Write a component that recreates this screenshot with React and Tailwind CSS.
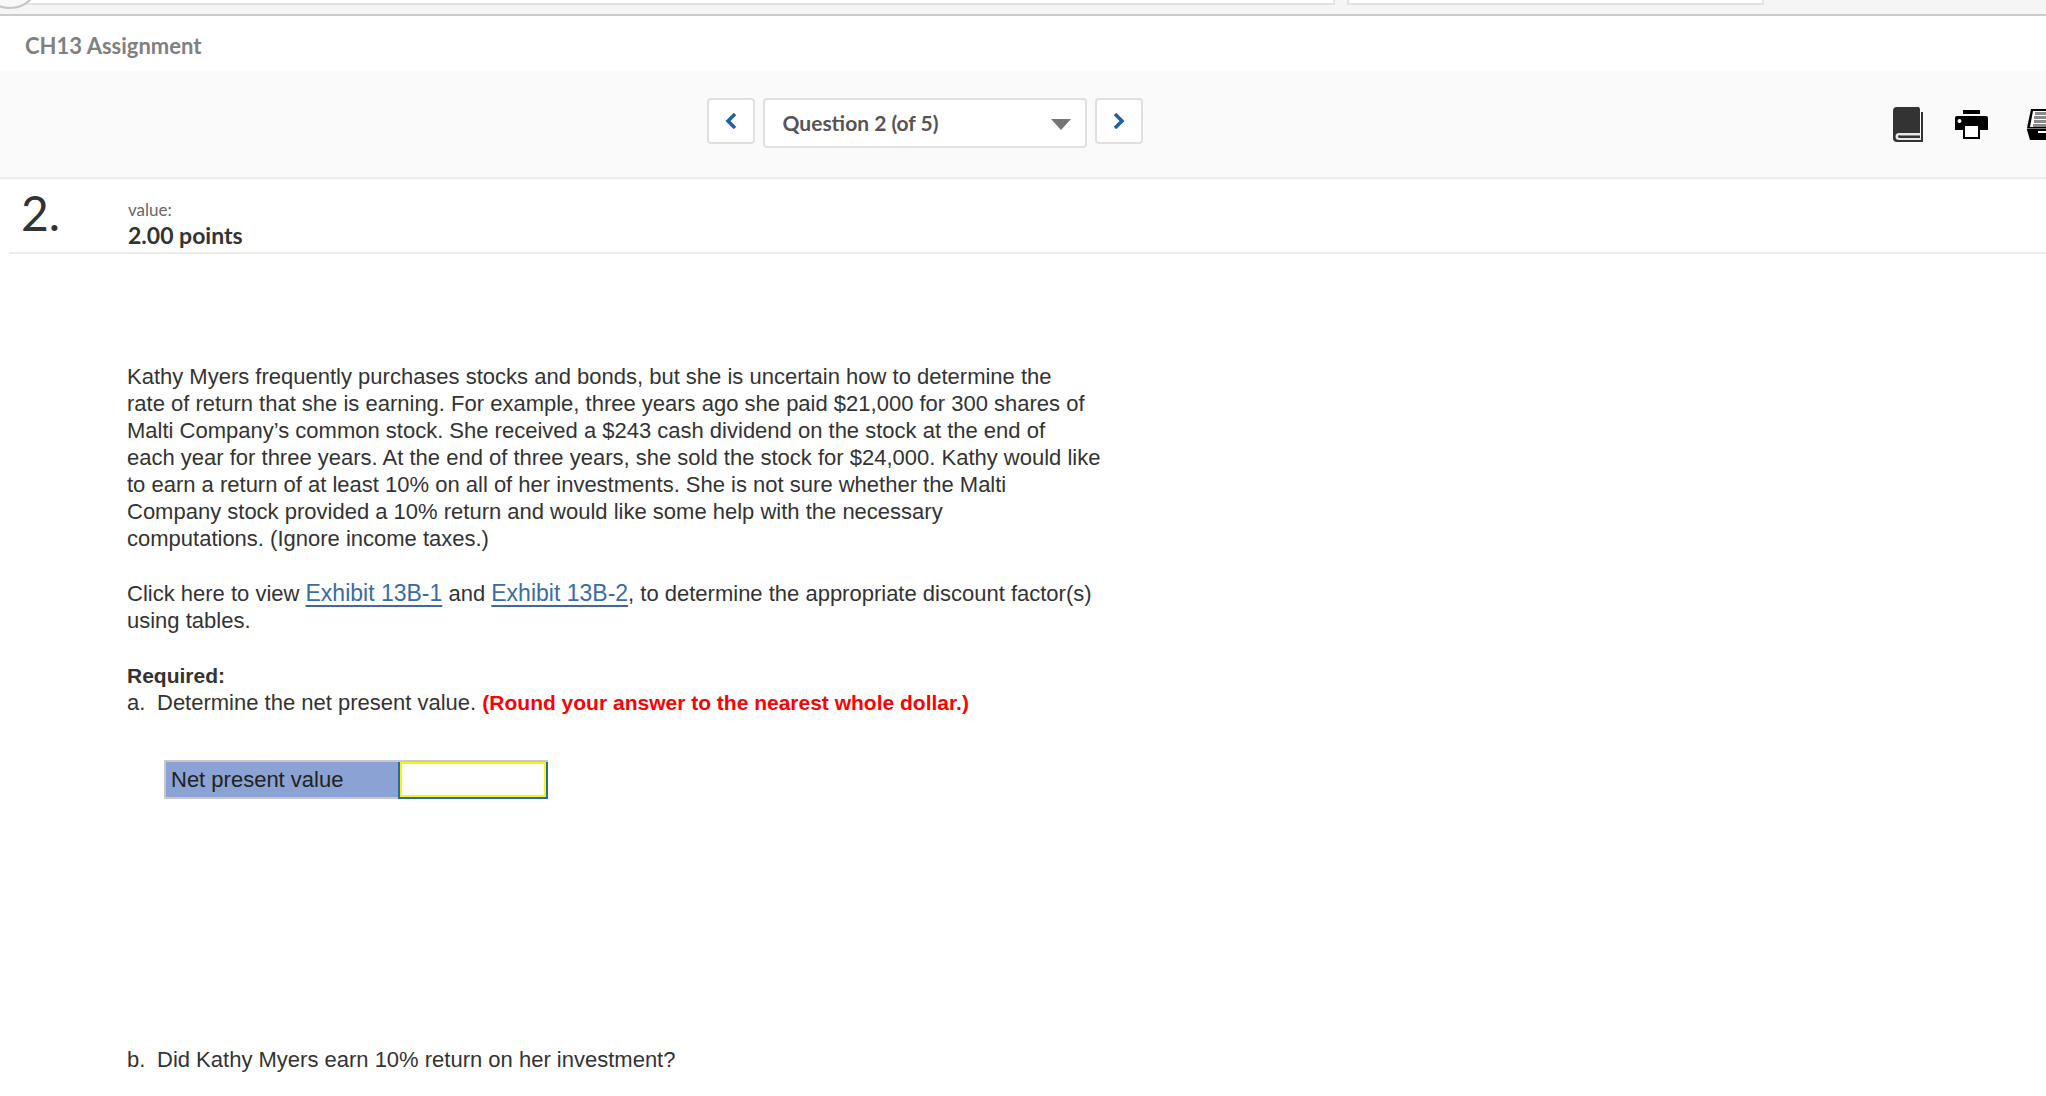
import React from 'react';

const BookIcon = () => (
  <svg width="31" height="35" viewBox="0 0 31 35" aria-hidden="true">
    <path d="M4 0H26L27 2V5H30V35H4Q0 35 0 31V4Q0 0 4 0Z" fill="#333333" />
    <path d="M27 5H28V31H27Z" fill="#ffffff" />
    <path d="M27 26H6Q2.500 26 2.500 29.500T6 33H28V31H7Q5 31 5 29.500T7 28H27Z" fill="#e8e8e8" />
    <path d="M7 28H27V29H7Z" fill="#8a8a8a" />
  </svg>
);

const PrinterIcon = () => (
  <svg width="33" height="29" viewBox="0 0 33 29" aria-hidden="true">
    <path
      d="M8 0H25V4H8ZM2 6H31Q33 6 33 8V20H25V29H8V20H0V8Q0 6 2 6Z"
      fill="#000000"
    />
    <path d="M10 16H23V27H10Z" fill="#ffffff" />
    <circle cx="4.500" cy="11" r="2" fill="#ffffff" />
  </svg>
);

const TrayIcon = () => (
  <svg width="40" height="31" viewBox="0 0 40 31" aria-hidden="true">
    <path d="M4 0H36L40 19V21L37 31H3L0 21V19Z" fill="#000000" />
    <path d="M6 2H34L37 18H3Z" fill="#ffffff" />
    <path d="M8 3H32V6H8ZM7 7H33V10H7ZM7 11H33V14H7ZM6 15H34V18H6Z" fill="#8a8a8a" />
    <path d="M0 19H40V20H0Z" fill="#777777" />
    <path d="M11 22H29V24H11Z" fill="#ffffff" />
  </svg>
);

const Chevron = ({ d }) => (
  <svg width="12" height="16" viewBox="0 0 12 16" fill="none" aria-hidden="true">
    <path d={d} stroke="#1f5fa6" strokeWidth="3.500" />
  </svg>
);

const BrowserEdge = () => (
  <div className="relative flex h-[16px] items-start gap-3 overflow-hidden border-b-2 border-[#cbcbcb] bg-[#f5f5f5] pr-[282px]">
    <div className="h-[5px] flex-1 border-b-2 border-r-2 border-[#e3e3e3] bg-white" />
    <div className="h-[5px] w-[417px] border-x-2 border-b-2 border-[#e3e3e3] bg-white" />
    <div className="absolute bottom-[5px] -left-5 h-[60px] w-[60px] rounded-full border-2 border-[#c4c4c4] bg-[#f8f8f8]" />
  </div>
);

const QuestionNav = () => (
  <nav className="flex h-[108px] items-start overflow-hidden border-b-2 border-[#ececec] bg-[#fafafa] pt-[27px]">
    <div className="flex flex-1 items-start justify-center gap-2">
      <button
        aria-label="Previous question"
        className="flex h-[46px] w-12 items-center justify-center rounded border-2 border-[#e0e0e0] bg-white"
      >
        <Chevron d="M10 1L3 8L10 15" />
      </button>
      <div className="relative">
        <select
          aria-label="Question"
          className="h-[50px] w-[324px] appearance-none rounded border-2 border-[#e0e0e0] bg-white pl-[18px] text-[21px] font-bold text-[#555555]"
        >
          <option>Question 2 (of 5)</option>
        </select>
        <svg
          className="pointer-events-none absolute right-4 top-[21px]"
          width="20"
          height="11"
          viewBox="0 0 20 11"
          aria-hidden="true"
        >
          <path d="M0 0H20L10 11Z" fill="#757575" />
        </svg>
      </div>
      <button
        aria-label="Next question"
        className="flex h-[46px] w-12 items-center justify-center rounded border-2 border-[#e0e0e0] bg-white"
      >
        <Chevron d="M2 1L9 8L2 15" />
      </button>
    </div>
    <div className="flex w-[197px] items-center gap-[31px] pl-11 pt-[9px]">
      <button aria-label="eBook" className="shrink-0"><BookIcon /></button>
      <button aria-label="Print" className="shrink-0"><PrinterIcon /></button>
      <button aria-label="References" className="ml-2 shrink-0"><TrayIcon /></button>
    </div>
  </nav>
);

const ExhibitLink = ({ children }) => (
  <a href="#exhibit" className="text-[23px] text-[#3a6ba5] underline decoration-2 underline-offset-4">
    {children}
  </a>
);

const App = () => {
  return (
    <div className="min-h-screen overflow-hidden bg-white font-['Lato',sans-serif] text-[#333333]">
      <BrowserEdge />
      <header className="flex h-[55px] items-center pl-[25px] pt-1">
        <h1 className="text-[22px] font-bold text-[#808080]">CH13 Assignment</h1>
      </header>
      <QuestionNav />

      <section className="ml-[9px] flex h-[75px] items-start border-b-2 border-[#ececec]">
        <div className="w-[119px] pl-3 pt-[10px] text-[48px] leading-[48px]">2.</div>
        <div className="pt-[19px]">
          <div className="text-[17px] leading-[24px] text-[#666666]">value:</div>
          <div className="text-[23px] font-bold leading-[26px]">2.00 points</div>
        </div>
      </section>

      <main className="pl-[127px] pt-[109px] font-['Liberation_Sans',sans-serif] text-[22px] leading-[27px]">
        <p>
          Kathy Myers frequently purchases stocks and bonds, but she is uncertain how to determine the
          <br />
          rate of return that she is earning. For example, three years ago she paid $21,000 for 300 shares of
          <br />
          Malti Company’s common stock. She received a $243 cash dividend on the stock at the end of
          <br />
          each year for three years. At the end of three years, she sold the stock for $24,000. Kathy would like
          <br />
          to earn a return of at least 10% on all of her investments. She is not sure whether the Malti
          <br />
          Company stock provided a 10% return and would like some help with the necessary
          <br />
          computations. (Ignore income taxes.)
        </p>
        <p className="mt-7">
          Click here to view <ExhibitLink>Exhibit 13B-1</ExhibitLink> and{' '}
          <ExhibitLink>Exhibit 13B-2</ExhibitLink>, to determine the appropriate discount factor(s)
          <br />
          using tables.
        </p>

        <div className="mt-7">
          <h2 className="text-[21px] font-bold">Required:</h2>
          <div className="flex">
            <span className="w-[30px]">a.</span>
            <p>
              Determine the net present value.{' '}
              <strong className="text-[21px] text-[#ff0000]">(Round your answer to the nearest whole dollar.)</strong>
            </p>
          </div>
        </div>

        <div className="ml-[37px] mt-[44px] flex h-[39px] w-[384px] border-2 border-r-0 border-[#c8c8cc]">
          <label htmlFor="npv" className="flex w-[232px] items-center bg-[#8aa3d4] pl-[5px] text-[#222222]">
            Net present value
          </label>
          <div className="-mb-[2px] flex flex-1 border-2 border-t-0 border-[#1f6cb0]">
            <input id="npv" type="text" className="w-full border-2 border-[#f5f510] bg-white px-1 outline-none" />
          </div>
        </div>

        <div className="mt-[247px] flex">
          <span className="w-[30px]">b.</span>
          <p>Did Kathy Myers earn 10% return on her investment?</p>
        </div>
      </main>
    </div>
  );
};

export default App;
